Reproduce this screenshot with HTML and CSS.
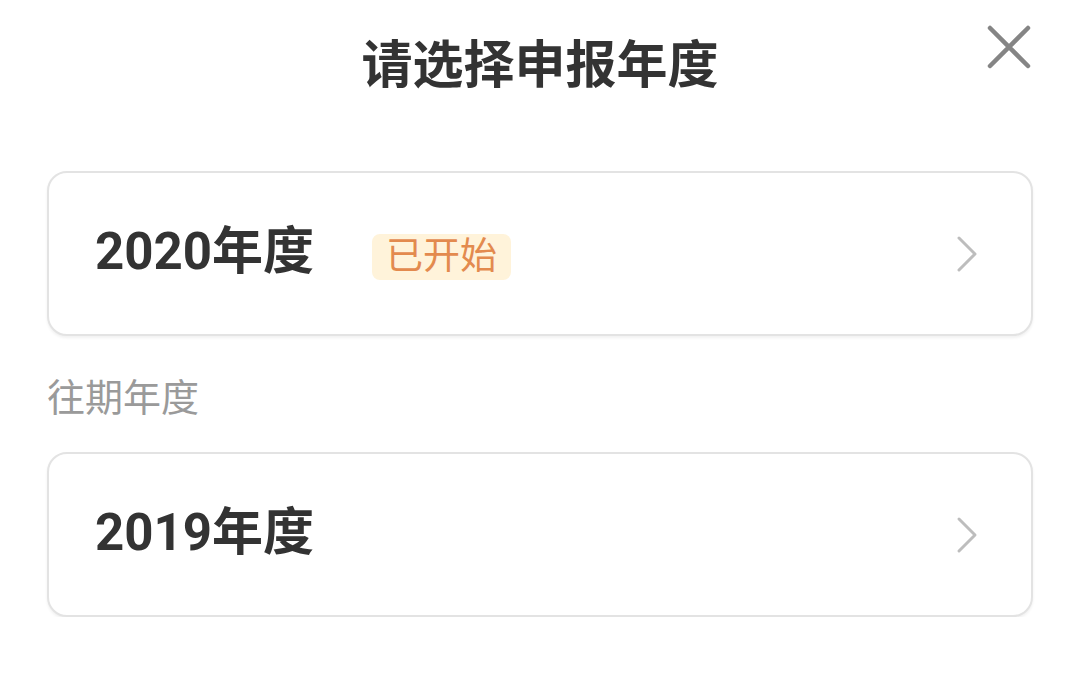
FILE: index.html
```html
<!DOCTYPE html>
<html lang="zh-CN">
<head>
    <meta charset="UTF-8">
    <meta name="viewport" content="width=device-width, initial-scale=1.0">
    <title>选择申报年度</title>
    <link rel="stylesheet" href="styles.css">
</head>
<body>
    <div class="sheet">
        <div class="sheet-header">
            <h1 class="sheet-title">请选择申报年度</h1>
            <button class="close" aria-label="关闭">
                <svg width="48" height="48" viewBox="0 0 48 48">
                    <path d="M5 5 L43 43 M43 5 L5 43" stroke="#858585" stroke-width="4.5" stroke-linecap="round" fill="none"/>
                </svg>
            </button>
        </div>

        <div class="year-card">
            <span class="year-name">2020年度</span>
            <span class="badge">已开始</span>
            <svg class="arrow" width="24" height="40" viewBox="0 0 24 40">
                <path d="M4 4 L20 20 L4 36" stroke="#bdbdbd" stroke-width="3" stroke-linecap="round" stroke-linejoin="round" fill="none"/>
            </svg>
        </div>

        <p class="section-label">往期年度</p>

        <div class="year-card">
            <span class="year-name">2019年度</span>
            <svg class="arrow" width="24" height="40" viewBox="0 0 24 40">
                <path d="M4 4 L20 20 L4 36" stroke="#bdbdbd" stroke-width="3" stroke-linecap="round" stroke-linejoin="round" fill="none"/>
            </svg>
        </div>
    </div>
</body>
</html>
```

FILE: styles.css
```css
body {
    margin: 0;
    padding: 0;
    background-color: #fff;
    font-family: Roboto, "Noto Sans CJK SC", sans-serif;
    color: #333;
}

.sheet {
    padding: 0 47px;
}

.sheet-header {
    position: relative;
    height: 122px;
    display: flex;
    align-items: center;
    justify-content: center;
    margin-bottom: 49px;
}

.sheet-title {
    margin: 0;
    font-size: 51px;
    font-weight: bold;
    color: #333;
}

.close {
    position: absolute;
    top: 23px;
    right: 0;
    padding: 0;
    border: none;
    background: none;
    cursor: pointer;
}

.year-card {
    display: flex;
    align-items: center;
    height: 161px;
    padding: 0 48px 0 46px;
    border: 2px solid #e3e3e3;
    border-radius: 20px;
    box-shadow: 0 2px 3px rgba(0, 0, 0, 0.06);
    background-color: #fff;
}

.year-name {
    font-size: 51px;
    font-weight: bold;
    color: #333;
    margin-top: -14px;
}

.badge {
    margin-left: 58px;
    margin-top: 7px;
    padding: 2px 14px;
    border-radius: 8px;
    background-color: #fff3da;
    color: #e38a4e;
    font-size: 37px;
    line-height: 42px;
}

.arrow {
    margin-left: auto;
    margin-right: 4px;
}

.section-label {
    margin: 34px 0 25px;
    font-size: 38px;
    line-height: 57px;
    color: #9a9a9a;
}
```
